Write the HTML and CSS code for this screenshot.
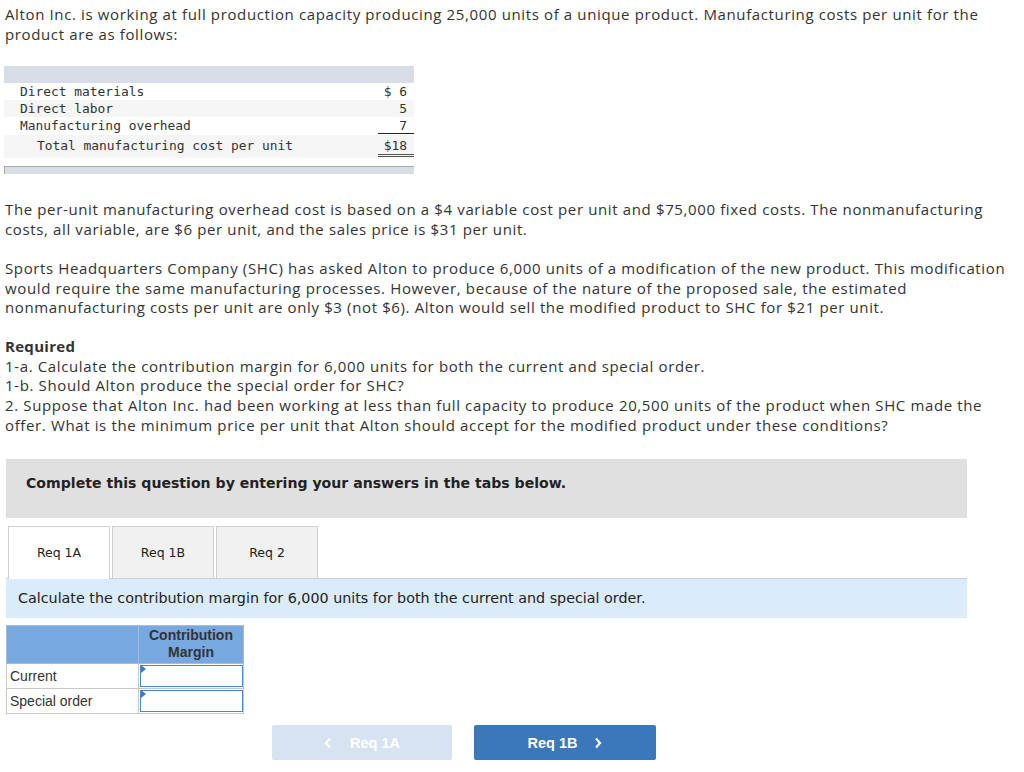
FILE: index.html
```html
<!DOCTYPE html>
<html>
<head>
<meta charset="utf-8">
<link rel="stylesheet" href="styles.css">
</head>
<body>
<div class="page">
  <p class="para p1">Alton Inc. is working at full production capacity producing 25,000 units of a unique product. Manufacturing costs per unit for the<br>product are as follows:</p>

  <div class="cost-table">
    <div class="ct-head"></div>
    <div class="ct-row"><span class="ct-label">Direct materials</span><span class="ct-amt">$ 6</span></div>
    <div class="ct-row alt"><span class="ct-label">Direct labor</span><span class="ct-amt">5</span></div>
    <div class="ct-row"><span class="ct-label">Manufacturing overhead</span><span class="ct-amt under">7</span></div>
    <div class="ct-row total"><span class="ct-label indent">Total manufacturing cost per unit</span><span class="ct-amt dbl">$18</span></div>
    <div class="ct-foot"></div>
  </div>

  <p class="para p2">The per-unit manufacturing overhead cost is based on a $4 variable cost per unit and $75,000 fixed costs. The nonmanufacturing<br>costs, all variable, are $6 per unit, and the sales price is $31 per unit.</p>

  <p class="para p3">Sports Headquarters Company (SHC) has asked Alton to produce 6,000 units of a modification of the new product. This modification<br>would require the same manufacturing processes. However, because of the nature of the proposed sale, the estimated<br>nonmanufacturing costs per unit are only $3 (not $6). Alton would sell the modified product to SHC for $21 per unit.</p>

  <p class="para p4"><b>Required</b><br>1-a. Calculate the contribution margin for 6,000 units for both the current and special order.<br>1-b. Should Alton produce the special order for SHC?<br>2. Suppose that Alton Inc. had been working at less than full capacity to produce 20,500 units of the product when SHC made the<br>offer. What is the minimum price per unit that Alton should accept for the modified product under these conditions?</p>

  <div class="instr-box">Complete this question by entering your answers in the tabs below.</div>

  <div class="tabs">
    <div class="tab active">Req 1A</div>
    <div class="tab">Req 1B</div>
    <div class="tab">Req 2</div>
  </div>
  <div class="tab-prompt">Calculate the contribution margin for 6,000 units for both the current and special order.</div>

  <table class="ans-table">
    <tr><th class="blank"></th><th class="cm">Contribution<br>Margin</th></tr>
    <tr><td class="lbl">Current</td><td class="inp"><div class="input"><span class="flag"></span></div></td></tr>
    <tr><td class="lbl">Special order</td><td class="inp"><div class="input"><span class="flag"></span></div></td></tr>
  </table>

  <div class="nav">
    <div class="btn prev"><svg class="chev" width="8" height="12" viewBox="0 0 8 12"><polyline points="6,1.5 2,6 6,10.5" fill="none" stroke="#fff" stroke-width="2.2"/></svg>Req 1A</div>
    <div class="btn next">Req 1B<svg class="chev r" width="8" height="12" viewBox="0 0 8 12"><polyline points="2,1.5 6,6 2,10.5" fill="none" stroke="#fff" stroke-width="2.2"/></svg></div>
  </div>
</div>
</body>
</html>
```
FILE: styles.css
```css
html, body { margin: 0; padding: 0; background: #fff; }
.page {
  padding: 5px 0 0 5px;
  width: 1019px;
  font-family: "Open Sans", "Lato", sans-serif;
  color: #333;
}
.para {
  margin: 0;
  font-size: 15px;
  letter-spacing: 0.63px;
  line-height: 19.7px;
  white-space: nowrap;
}
.p1 { margin-bottom: 22px; }
.cost-table {
  width: 410px;
  margin-left: -1px;
  font-family: "DejaVu Sans Mono", "Liberation Mono", monospace;
  font-size: 12.9px;
  color: #333;
}
.ct-head { height: 17px; background: #d9dde7; }
.ct-row {
  display: flex;
  justify-content: space-between;
  height: 17px;
  line-height: 17px;
  padding-left: 16px;
}
.ct-row.alt { background: #f5f5f5; }
.ct-row.total { height: 23px; line-height: 22px; background: #f5f5f5; margin-top: 1px; }
.ct-label.indent { padding-left: 17px; }
.ct-amt {
  width: 36px;
  text-align: right;
  padding-right: 7px;
  box-sizing: border-box;
}
.ct-amt.under { border-bottom: 1px solid #222; height: 17px; }
.ct-amt.dbl { border-bottom: 3px double #555; height: 22px; }
.ct-foot {
  height: 7px;
  margin-top: 8px;
  background: #d9dde7;
  border-top: 1px solid #aaa;
  border-left: 1px solid #aaa;
}
.p2 { margin-top: 26px; }
.p3 { margin-top: 19px; }
.p4 { margin-top: 19px; }
.p4 b { font-weight: 700; letter-spacing: 0.3px; }

.instr-box {
  margin-top: 24px;
  margin-left: 1px;
  width: 961px;
  height: 59px;
  box-sizing: border-box;
  background: #e0e0e0;
  padding: 16px 0 0 20px;
  font-family: "DejaVu Sans", Verdana, sans-serif;
  font-weight: bold;
  font-size: 14.1px;
  color: #222;
}
.tabs {
  display: flex;
  gap: 2px;
  margin-top: 8px;
  margin-left: 3px;
  height: 52px;
}
.tab {
  width: 102px;
  box-sizing: border-box;
  border: 1px solid #d0d0d0;
  border-bottom: none;
  background: #f1f1f1;
  font-family: "DejaVu Sans", Verdana, sans-serif;
  font-size: 12.5px;
  color: #222;
  text-align: center;
  line-height: 52px;
}
.tab.active { background: #fff; position: relative; z-index: 1; height: 53px; }
.tab-prompt {
  margin-left: 1px;
  width: 961px;
  height: 40px;
  box-sizing: border-box;
  background: #daebf9;
  border-top: 1px solid #cfcfcf;
  padding: 11px 0 0 12px;
  font-family: "DejaVu Sans", Verdana, sans-serif;
  font-size: 14.3px;
  color: #222;
}
.ans-table {
  margin-top: 7px;
  margin-left: 1px;
  border-collapse: collapse;
  font-family: "Liberation Sans", Arial, sans-serif;
  font-size: 14px;
  color: #333;
}
.ans-table th {
  background: #78a8e0;
  border: 1px solid #a8bcd6;
  height: 36px;
  padding: 0;
}
.ans-table th.blank { width: 131px; }
.ans-table th.cm {
  width: 104px;
  font-weight: bold;
  line-height: 17px;
  vertical-align: top;
  padding-top: 1px;
  color: #333;
}
.ans-table td {
  border: 1px solid #c8c8c8;
  height: 24px;
  padding: 0;
}
.ans-table td.lbl { padding-left: 3px; }
.ans-table td.inp { padding: 0; }
.input {
  position: relative;
  height: 20px;
  margin: 0 0 0 1px;
  border: 1.5px solid #4f86c6;
  background: #fff;
}
.flag {
  position: absolute;
  left: 0;
  top: -1px;
  width: 0; height: 0;
  border-top: 4px solid transparent;
  border-bottom: 4px solid transparent;
  border-left: 5px solid #3e7cc9;
}
.nav {
  display: flex;
  gap: 22px;
  margin-top: 11px;
  margin-left: 267px;
}
.btn {
  height: 35px;
  width: 180px;
  border-radius: 2px;
  color: #fff;
  font-family: "Liberation Sans", Arial, sans-serif;
  font-weight: bold;
  font-size: 14.5px;
  display: flex;
  align-items: center;
  justify-content: center;
}
.btn.prev { background: #d7e3f1; }
.btn.next { background: #3b77bb; width: 182px; }
.chev { margin-right: 18px; }
.chev.r { margin-right: 0; margin-left: 17px; }
```
